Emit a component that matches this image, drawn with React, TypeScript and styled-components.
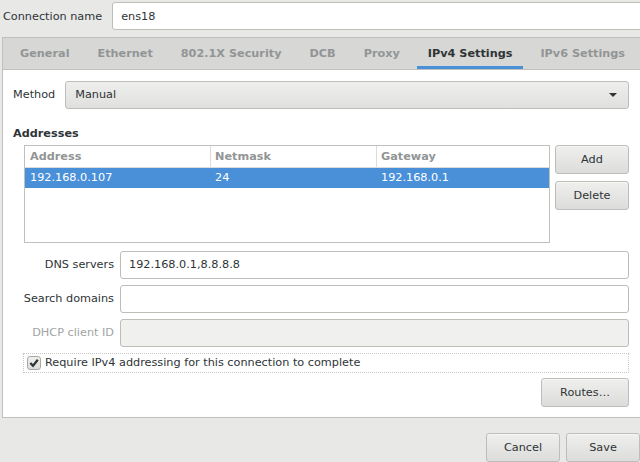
import styled, { createGlobalStyle } from "styled-components";

const GlobalStyle = createGlobalStyle`
  html, body {
    margin: 0;
    padding: 0;
    background: #e8e8e7;
    overflow: hidden;
  }
  body {
    font-family: "DejaVu Sans", "Liberation Sans", sans-serif;
    font-size: 11.25px;
    color: #2e3436;
  }
`;

const Dialog = styled.div`
  width: 660px;
  height: 462px;
  display: flex;
  flex-direction: column;
  background: #e8e8e7;
`;

const NameRow = styled.div`
  display: flex;
  align-items: center;
  gap: 10px;
  padding: 2px 0 0 3px;
  height: 29px;
`;

const Label = styled.span<{ $dim?: boolean }>`
  color: ${p => (p.$dim ? "#a1a4a4" : "#2e3436")};
  white-space: nowrap;
`;

const Entry = styled.div<{ $disabled?: boolean }>`
  flex: 1;
  height: 28px;
  box-sizing: border-box;
  display: flex;
  align-items: center;
  padding: 0 8px;
  background: ${p => (p.$disabled ? "#f0f0ef" : "#ffffff")};
  border: 1px solid #bdbdba;
  border-radius: 3px;
  color: #2e3436;
  white-space: nowrap;
`;

const Notebook = styled.div`
  margin: 6px 0 0 2px;
  height: 381px;
  display: flex;
  flex-direction: column;
  border: 1px solid #c0c0bd;
  border-right: none;
  background: #ffffff;
`;

const TabBar = styled.div`
  height: 31px;
  display: flex;
  gap: 6px;
  padding-left: 6px;
  background: #d7d7d5;
  border-bottom: 1px solid #c0c0bd;
`;

const Tab = styled.div<{ $active?: boolean }>`
  display: flex;
  align-items: center;
  padding: 0 11px;
  font-weight: bold;
  white-space: nowrap;
  color: ${p => (p.$active ? "#2e3436" : "#929595")};
  box-shadow: ${p => (p.$active ? "inset 0 -3px 0 #4a90d9" : "none")};
`;

const Page = styled.div`
  width: 616px;
  padding: 11px 0 0 10px;
  display: flex;
  flex-direction: column;
`;

const MethodRow = styled.div`
  display: flex;
  align-items: center;
  gap: 10px;
`;

const Combo = styled.div`
  flex: 1;
  height: 28px;
  box-sizing: border-box;
  display: flex;
  align-items: center;
  justify-content: space-between;
  padding: 0 11px 0 9px;
  border: 1px solid #bdbdba;
  border-radius: 3px;
  background: linear-gradient(#eeeeec, #e0e0de);
`;

const Arrow = styled.span`
  width: 0;
  height: 0;
  border-left: 4px solid transparent;
  border-right: 4px solid transparent;
  border-top: 4px solid #2e3436;
`;

const Heading = styled.div`
  font-weight: bold;
  margin: 18px 0 0 0;
  height: 18px;
`;

const AddressBlock = styled.div`
  display: flex;
  gap: 5px;
  margin: 0 0 0 11px;
`;

const Table = styled.div`
  width: 527px;
  height: 98px;
  box-sizing: border-box;
  border: 1px solid #c0c0bd;
  background: #ffffff;
`;

const Row = styled.div<{ $head?: boolean; $selected?: boolean }>`
  display: grid;
  grid-template-columns: 185px 166px 1fr;
  height: ${p => (p.$head ? "21px" : "20px")};
  border-bottom: ${p => (p.$head ? "1px solid #dcdcda" : "none")};
  background: ${p => (p.$selected ? "#4a90d9" : "transparent")};
  color: ${p => (p.$head ? "#929595" : p.$selected ? "#ffffff" : "#2e3436")};
  font-weight: ${p => (p.$head ? "bold" : "normal")};
`;

const Cell = styled.div<{ $divided?: boolean }>`
  display: flex;
  align-items: center;
  padding-left: 4px;
  border-left: ${p => (p.$divided ? "1px solid #dcdcda" : "1px solid transparent")};
`;

const SideButtons = styled.div`
  display: flex;
  flex-direction: column;
  gap: 7px;
`;

const Button = styled.div<{ $w?: number }>`
  width: ${p => p.$w ?? 74}px;
  height: 29px;
  box-sizing: border-box;
  display: flex;
  align-items: center;
  justify-content: center;
  border: 1px solid #bdbdba;
  border-radius: 3px;
  background: linear-gradient(#efefed, #dcdcda);
  box-shadow: inset 0 1px 0 #f6f6f5;
  color: #2e3436;
`;

const Form = styled.div`
  display: grid;
  grid-template-columns: 90px 1fr;
  column-gap: 6px;
  row-gap: 6px;
  margin: 8px 0 0 11px;
  align-items: center;
`;

const FormLabel = styled(Label)`
  justify-self: end;
`;

const CheckRow = styled.div`
  display: flex;
  align-items: center;
  gap: 4px;
  height: 20px;
  margin: 6px 0 0 10px;
  padding-left: 3px;
  box-sizing: border-box;
  border: 1px dotted #c8c8c6;
`;

const CheckBox = styled.span`
  width: 14px;
  height: 14px;
  box-sizing: border-box;
  display: flex;
  align-items: center;
  justify-content: center;
  border: 1px solid #a8a8a5;
  border-radius: 3px;
  background: linear-gradient(#efefed, #dcdcda);
`;

const RoutesRow = styled.div`
  display: flex;
  justify-content: flex-end;
  margin-top: 5px;
`;

const Footer = styled.div`
  display: flex;
  gap: 6px;
  padding: 15px 0 0 486px;
`;

function App() {
  return (
    <>
      <GlobalStyle />
      <Dialog>
        <NameRow>
          <Label>Connection name</Label>
          <Entry>ens18</Entry>
        </NameRow>
        <Notebook>
          <TabBar>
            <Tab>General</Tab>
            <Tab>Ethernet</Tab>
            <Tab>802.1X Security</Tab>
            <Tab>DCB</Tab>
            <Tab>Proxy</Tab>
            <Tab $active>IPv4 Settings</Tab>
            <Tab>IPv6 Settings</Tab>
          </TabBar>
          <Page>
            <MethodRow>
              <Label>Method</Label>
              <Combo>
                Manual
                <Arrow />
              </Combo>
            </MethodRow>
            <Heading>Addresses</Heading>
            <AddressBlock>
              <Table>
                <Row $head>
                  <Cell>Address</Cell>
                  <Cell $divided>Netmask</Cell>
                  <Cell $divided>Gateway</Cell>
                </Row>
                <Row $selected>
                  <Cell>192.168.0.107</Cell>
                  <Cell>24</Cell>
                  <Cell>192.168.0.1</Cell>
                </Row>
              </Table>
              <SideButtons>
                <Button>Add</Button>
                <Button>Delete</Button>
              </SideButtons>
            </AddressBlock>
            <Form>
              <FormLabel>DNS servers</FormLabel>
              <Entry>192.168.0.1,8.8.8.8</Entry>
              <FormLabel>Search domains</FormLabel>
              <Entry />
              <FormLabel $dim>DHCP client ID</FormLabel>
              <Entry $disabled />
            </Form>
            <CheckRow>
              <CheckBox>
                <svg width="10" height="10" viewBox="0 0 10 10">
                  <path d="M1.3 5 L4 7.8 L8.8 1.8" fill="none" stroke="#2e3436" strokeWidth="2.2" />
                </svg>
              </CheckBox>
              Require IPv4 addressing for this connection to complete
            </CheckRow>
            <RoutesRow>
              <Button $w={88}>Routes…</Button>
            </RoutesRow>
          </Page>
        </Notebook>
        <Footer>
          <Button>Cancel</Button>
          <Button>Save</Button>
        </Footer>
      </Dialog>
    </>
  );
}

export default App;
